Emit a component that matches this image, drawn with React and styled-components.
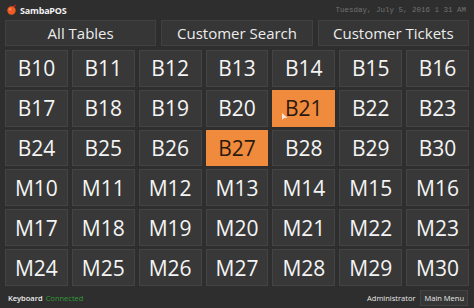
import React from 'react'
import styled, { createGlobalStyle } from 'styled-components'

const GlobalStyle = createGlobalStyle`
  html, body {
    margin: 0;
    padding: 0;
    background: #2e2e2e;
  }
  body {
    font-family: "Open Sans", "Noto Sans", sans-serif;
  }
`

const Screen = styled.div`
  width: 474px;
  height: 308px;
  display: flex;
  flex-direction: column;
  background: #2e2e2e;
  overflow: hidden;
`

const Header = styled.div`
  height: 20px;
  display: flex;
  align-items: center;
  justify-content: space-between;
  padding: 0 8px 0 6px;
`

const Logo = styled.div`
  display: flex;
  align-items: center;
  gap: 2px;
  color: #f2f2f2;
  font-size: 9px;
  font-weight: 700;
  letter-spacing: -0.2px;
`

const DateText = styled.span`
  font-family: "Liberation Mono", "DejaVu Sans Mono", monospace;
  font-size: 7.5px;
  color: #727272;
`

const Tabs = styled.div`
  display: grid;
  grid-template-columns: repeat(3, 1fr);
  gap: 5px;
  padding: 0 5px;
  height: 26px;
`

const Tab = styled.div`
  display: flex;
  align-items: center;
  justify-content: center;
  background: #363636;
  border: 1px solid #414141;
  color: #ececec;
  font-size: 15px;
`

const Grid = styled.div`
  flex: 1;
  display: grid;
  grid-template-columns: repeat(7, 1fr);
  grid-template-rows: repeat(6, 1fr);
  column-gap: 4px;
  row-gap: 3px;
  padding: 4px 5px 2px;
`

const Cell = styled.div`
  position: relative;
  display: flex;
  align-items: center;
  justify-content: center;
  background: ${p => (p.$active ? '#f08a3c' : '#383838')};
  border: 1px solid ${p => (p.$active ? '#f08a3c' : '#444444')};
  color: ${p => (p.$active ? '#2a1a10' : '#f4f4f4')};
  font-size: 21px;
`

const Pointer = styled.svg`
  position: absolute;
  left: 9px;
  top: 22px;
`

const Footer = styled.div`
  height: 20px;
  display: flex;
  align-items: center;
  justify-content: space-between;
  padding: 0 6px 0 8px;
  font-size: 7.5px;
`

const Status = styled.div`
  display: flex;
  gap: 3px;
  color: #f0f0f0;
  font-weight: 600;
`

const Connected = styled.span`
  color: #2e9b35;
  font-weight: 400;
`

const UserArea = styled.div`
  display: flex;
  align-items: center;
  gap: 5px;
  color: #e8e8e8;
`

const MenuButton = styled.div`
  padding: 2px 3px;
  background: #363636;
  border: 1px solid #434343;
  color: #e8e8e8;
`

const tables = [
  ['B10', 'B11', 'B12', 'B13', 'B14', 'B15', 'B16'],
  ['B17', 'B18', 'B19', 'B20', 'B21', 'B22', 'B23'],
  ['B24', 'B25', 'B26', 'B27', 'B28', 'B29', 'B30'],
  ['M10', 'M11', 'M12', 'M13', 'M14', 'M15', 'M16'],
  ['M17', 'M18', 'M19', 'M20', 'M21', 'M22', 'M23'],
  ['M24', 'M25', 'M26', 'M27', 'M28', 'M29', 'M30'],
].flat()

const busy = ['B21', 'B27']

const App = () => {
  return (
    <Screen>
      <GlobalStyle />
      <Header>
        <Logo>
          <svg width="12" height="12" viewBox="0 0 12 12">
            <circle cx="5.5" cy="6.5" r="4.2" fill="#f05a24" />
            <path d="M7.5 3 L9.5 1" stroke="#c8281e" strokeWidth="1.2" />
            <circle cx="4.2" cy="5.2" r="1.2" fill="#ff8a50" />
          </svg>
          SambaPOS
        </Logo>
        <DateText>Tuesday, July 5, 2016 1 31 AM</DateText>
      </Header>
      <Tabs>
        <Tab>All Tables</Tab>
        <Tab>Customer Search</Tab>
        <Tab>Customer Tickets</Tab>
      </Tabs>
      <Grid>
        {tables.map(t => (
          <Cell key={t} $active={busy.includes(t)}>
            {t}
            {t === 'B21' && (
              <Pointer width="6" height="8" viewBox="0 0 6 8">
                <path d="M0 0 L0 7 L2 5 L5.5 5 Z" fill="#f6e6da" />
              </Pointer>
            )}
          </Cell>
        ))}
      </Grid>
      <Footer>
        <Status>
          Keyboard <Connected>Connected</Connected>
        </Status>
        <UserArea>
          Administrator
          <MenuButton>Main Menu</MenuButton>
        </UserArea>
      </Footer>
    </Screen>
  )
}

export default App
